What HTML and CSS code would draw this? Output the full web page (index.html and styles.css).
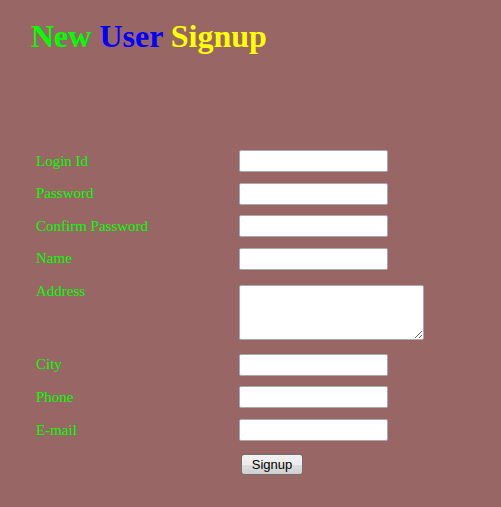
FILE: index.html
```html
<!DOCTYPE html>
<html lang="en">
<head>
  <meta charset="UTF-8" />
  <title>New User Signup</title>
  <link rel="stylesheet" href="styles.css">
</head>
<body>

  <h1 class="title">
    <span class="green">New</span>
    <span class="blue">User</span>
    <span class="yellow">Signup</span>
  </h1>

  <form class="signup-form">
    <div class="row">
      <label for="login">Login Id</label>
      <input type="text" id="login">
    </div>
    <div class="row">
      <label for="pass">Password</label>
      <input type="password" id="pass">
    </div>
    <div class="row">
      <label for="cpass">Confirm Password</label>
      <input type="password" id="cpass">
    </div>
    <div class="row">
      <label for="name">Name</label>
      <input type="text" id="name">
    </div>
    <div class="row row-top">
      <label for="address">Address</label>
      <textarea id="address"></textarea>
    </div>
    <div class="row">
      <label for="city">City</label>
      <input type="text" id="city">
    </div>
    <div class="row">
      <label for="phone">Phone</label>
      <input type="text" id="phone">
    </div>
    <div class="row">
      <label for="email">E-mail</label>
      <input type="text" id="email">
    </div>
    <div class="row">
      <span class="spacer"></span>
      <button type="submit" class="btn">Signup</button>
    </div>
  </form>

</body>
</html>
```

FILE: styles.css
```css
body {
  margin: 0;
  padding: 18px 31px;
  background: #996666;
  font-family: "Liberation Serif", "Times New Roman", serif;
}

.title {
  font-size: 32px;
  font-weight: bold;
  margin: 0;
  line-height: 37px;
}

.green { color: #00ff00; }
.blue { color: #0000ff; }
.yellow { color: #ffff00; }

.signup-form {
  margin-top: 95px;
  padding-left: 5px;
  display: flex;
  flex-direction: column;
  gap: 10.67px;
}

.row {
  display: flex;
  align-items: center;
}

.row-top {
  align-items: flex-start;
  margin-top: 4px;
  margin-bottom: 3.5px;
}

.row label,
.spacer {
  width: 203px;
  color: #00ff00;
  font-size: 15px;
}

.row-top label {
  margin-top: -2px;
}

.row input {
  width: 149px;
  height: 22px;
  box-sizing: border-box;
  margin: 0;
  border: 1px solid #a9a9b4;
  border-radius: 2px;
  background: #fff;
}

.row textarea {
  width: 185px;
  height: 55px;
  box-sizing: border-box;
  margin: 0;
  border: 1px solid #a9a9b4;
  border-radius: 2px;
  background: #fff;
}

.btn {
  margin: 2px 0 0 2px;
  width: 62px;
  height: 21px;
  padding: 0;
  font-family: "Liberation Sans", Arial, sans-serif;
  font-size: 13px;
  color: #000;
  border: 1px solid #707070;
  border-radius: 3px;
  background: linear-gradient(#f2f2f2, #ebebeb 50%, #dddddd 51%, #cfcfcf);
}
```
